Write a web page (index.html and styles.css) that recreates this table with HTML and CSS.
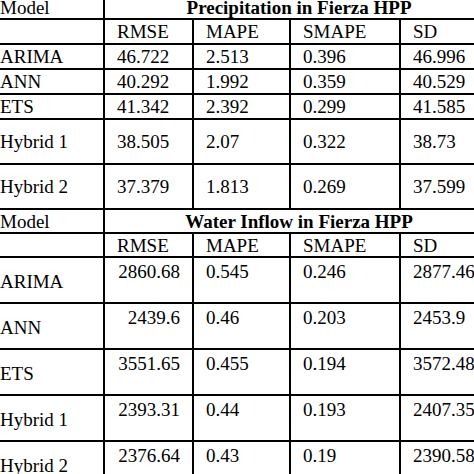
FILE: index.html
```html
<!DOCTYPE html>
<html>
<head>
<meta charset="utf-8">
<link rel="stylesheet" href="styles.css">
</head>
<body>
<table class="results">
  <colgroup>
    <col class="c-model">
    <col class="c-rmse">
    <col class="c-mape">
    <col class="c-smape">
    <col class="c-sd">
  </colgroup>
  <tbody class="precip">
    <tr class="r-title">
      <td>Model</td>
      <td colspan="4" class="title">Precipitation in Fierza HPP</td>
    </tr>
    <tr class="r-short">
      <td></td><td>RMSE</td><td>MAPE</td><td>SMAPE</td><td>SD</td>
    </tr>
    <tr class="r-short">
      <td>ARIMA</td><td>46.722</td><td>2.513</td><td>0.396</td><td>46.996</td>
    </tr>
    <tr class="r-short">
      <td>ANN</td><td>40.292</td><td>1.992</td><td>0.359</td><td>40.529</td>
    </tr>
    <tr class="r-short">
      <td>ETS</td><td>41.342</td><td>2.392</td><td>0.299</td><td>41.585</td>
    </tr>
    <tr class="r-tall">
      <td>Hybrid 1</td><td>38.505</td><td>2.07</td><td>0.322</td><td>38.73</td>
    </tr>
    <tr class="r-tall">
      <td>Hybrid 2</td><td>37.379</td><td>1.813</td><td>0.269</td><td>37.599</td>
    </tr>
  </tbody>
  <tbody class="inflow">
    <tr class="r-title2">
      <td>Model</td>
      <td colspan="4" class="title">Water Inflow in Fierza HPP</td>
    </tr>
    <tr class="r-head2">
      <td></td><td>RMSE</td><td>MAPE</td><td>SMAPE</td><td>SD</td>
    </tr>
    <tr class="r-data2">
      <td class="lbl">ARIMA</td><td class="num">2860.68</td><td>0.545</td><td>0.246</td><td>2877.46</td>
    </tr>
    <tr class="r-data2">
      <td class="lbl">ANN</td><td class="num">2439.6</td><td>0.46</td><td>0.203</td><td>2453.9</td>
    </tr>
    <tr class="r-data2">
      <td class="lbl">ETS</td><td class="num">3551.65</td><td>0.455</td><td>0.194</td><td>3572.48</td>
    </tr>
    <tr class="r-data2">
      <td class="lbl">Hybrid 1</td><td class="num">2393.31</td><td>0.44</td><td>0.193</td><td>2407.35</td>
    </tr>
    <tr class="r-data2">
      <td class="lbl">Hybrid 2</td><td class="num">2376.64</td><td>0.43</td><td>0.19</td><td>2390.58</td>
    </tr>
  </tbody>
</table>
</body>
</html>
```

FILE: styles.css
```css
html, body {
  margin: 0;
  padding: 0;
  background: #ffffff;
  overflow: hidden;
}

.results {
  border-collapse: collapse;
  table-layout: fixed;
  width: 507px;
  margin-left: -14px;
  margin-top: -7px;
  font-family: "Liberation Serif", "Times New Roman", serif;
  font-size: 19px;
  line-height: 21px;
  color: #000;
}

.c-model { width: 117px; }
.c-rmse { width: 89px; }
.c-mape { width: 97px; }
.c-smape { width: 110px; }
.c-sd { width: 94px; }

.results td {
  border: 2px solid #000;
  padding: 0 0 0 12px;
  vertical-align: middle;
  white-space: nowrap;
  overflow: hidden;
}

.results .title {
  text-align: center;
  font-weight: bold;
  padding-left: 0;
}

.r-title { height: 25px; }
.r-title td {
  padding-top: 2px;
  line-height: 12px;
}
.r-short { height: 25px; }
.r-tall { height: 45px; }
.r-title2 { height: 24px; }
.r-head2 { height: 24px; }
.r-data2 { height: 46px; }

.r-data2 td {
  vertical-align: top;
  padding-top: 3px;
}

.r-data2 td.lbl {
  vertical-align: middle;
  padding-top: 2px;
}

.r-data2 td.num {
  text-align: right;
  padding-left: 0;
  padding-right: 12px;
}
```
